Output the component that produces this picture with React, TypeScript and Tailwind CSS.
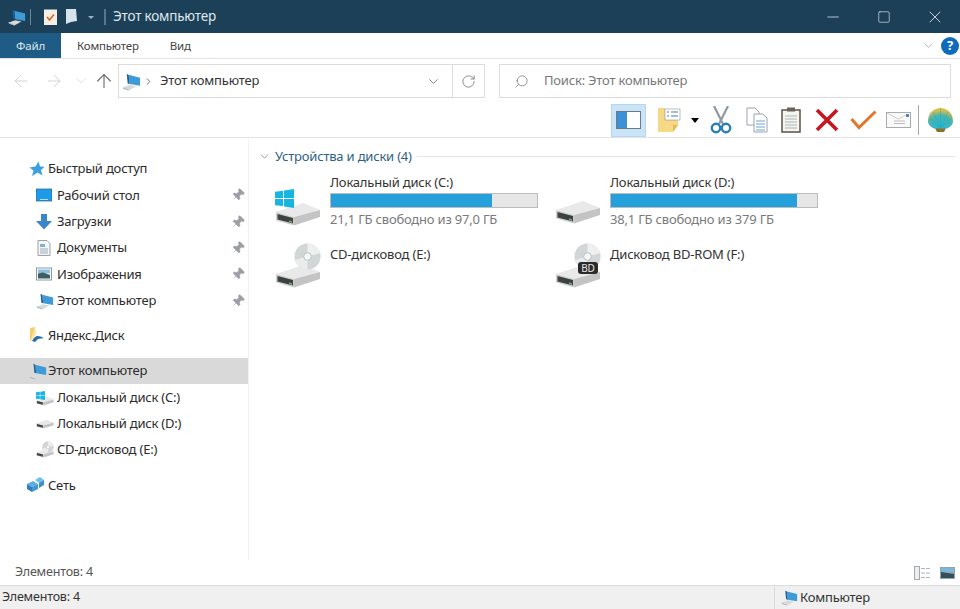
import { ArrowLeft, ArrowRight, ArrowUp, ChevronDown, ChevronRight, Minus, Pin, RotateCw, Search, Square, X } from "lucide-react";

const PcIcon = ({ size = 18 }: { size?: number }) => (
  <svg width={size} height={size} viewBox="0 0 20 20" className="shrink-0">
    <path d="M0 16.5 L8 13.5 L15 15 L7 19.5 Z" fill="#d5dadd" />
    <path d="M1 16.5 L7 18.5 L7 19.5 L1 17.5 Z" fill="#aab2b8" />
    <path d="M7 3 L19 6 V14.5 L8 12.5 Z" fill="#3f9bd8" />
    <path d="M7 3 L5 2 L6 12 L8 12.5 Z" fill="#1d5f96" />
  </svg>
);

const Drive = ({ w = 46, h = 24 }: { w?: number; h?: number }) => (
  <svg width={w} height={h} viewBox="0 0 46 24" className="shrink-0">
    <path d="M1 10 L28 1 L45 8 L19 15 Z" fill="#e9e9e9" />
    <path d="M19 15 L45 8 V15 L19 23.5 Z" fill="#c4c4c4" />
    <path d="M1 10 L19 15 V23.5 L1 18.5 Z" fill="#d0d0d0" />
    <path d="M2.5 12 L18 16 V21.5 L2.5 17.5 Z" fill="#3b423f" />
    <path d="M14 18.5 L17 19.3 V20.8 L14 20 Z" fill="#74b67c" />
  </svg>
);

const Disc = ({ size = 32 }: { size?: number }) => (
  <svg width={size} height={size} viewBox="0 0 32 32" className="shrink-0">
    <circle cx="16" cy="16" r="15.5" fill="#d3d6d6" />
    <path d="M16 .5 A15.5 15.5 0 0 1 31 12 L16 16 Z" fill="#eef0f0" />
    <path d="M16 31.5 A15.5 15.5 0 0 1 1 20 L16 16 Z" fill="#eaecec" />
    <circle cx="16" cy="16" r="4.5" fill="#f7f7f7" stroke="#b4b8b8" />
  </svg>
);

const WinLogo = ({ size = 20 }: { size?: number }) => (
  <svg width={size} height={size} viewBox="0 0 20 20" className="shrink-0">
    <path d="M0 3 L8.5 1.8 V9.5 H0 Z M9.5 1.6 L20 0 V9.5 H9.5 Z M0 10.5 H8.5 V18 L0 17 Z M9.5 10.5 H20 V20 L9.5 18.3 Z" fill="#16b5e4" />
  </svg>
);

const DriveC = () => (
  <div className="relative w-[46px] h-[53px] shrink-0 flex items-end">
    <Drive />
    <div className="absolute left-0 top-[16px]">
      <WinLogo size={19} />
    </div>
  </div>
);

const DrivePlain = () => (
  <div className="w-[46px] h-[51px] shrink-0 flex items-end">
    <Drive />
  </div>
);

const DriveDisc = ({ bd }: { bd?: boolean }) => (
  <div className="relative w-[46px] h-[43px] shrink-0 flex items-end">
    <Drive />
    <div className="absolute left-[19px] top-[-2px] z-0">
      <Disc size={27} />
    </div>
    {bd && (
      <div className="absolute left-[23px] top-[17px] w-[20px] h-[12px] rounded-[3px] bg-[#2a2a2a] text-[#e6e6e6] text-[10px] leading-[12px] text-center">
        BD
      </div>
    )}
  </div>
);

const QuickStar = () => (
  <svg width="16" height="16" viewBox="0 0 16 16" className="shrink-0">
    <path d="M9.5 .5 L11 5.5 L15.5 5.8 L12 9 L13.5 14.5 L8.5 11.5 L3 15 L4.5 9.5 L.5 6.5 L6.5 5.5 Z" fill="#3b9fe0" />
  </svg>
);

const DesktopIcon = () => (
  <svg width="16" height="16" viewBox="0 0 16 16" className="shrink-0">
    <rect x="0" y="2" width="16" height="12" fill="#1d9be6" stroke="#22618f" strokeWidth="0.7" />
    <rect x="4" y="12.2" width="8" height="0.8" fill="#d7eefb" />
  </svg>
);

const DownloadIcon = () => (
  <svg width="16" height="16" viewBox="0 0 16 16" className="shrink-0">
    <path d="M5 0 H11 V7 H16 L8 15.5 L0 7 H5 Z" fill="#3a86cb" />
  </svg>
);

const DocIcon = () => (
  <svg width="16" height="16" viewBox="0 0 16 16" className="shrink-0">
    <path d="M2 .5 H11 L14 3.5 V15.5 H2 Z" fill="#f4f6f7" stroke="#9aa3aa" />
    <rect x="4" y="4" width="5" height="3" fill="#7fb3cf" />
    <path d="M4 9 H12 M4 11 H12 M4 13 H12" stroke="#8d9aa3" strokeWidth="0.8" />
  </svg>
);

const PicIcon = () => (
  <svg width="16" height="16" viewBox="0 0 16 16" className="shrink-0">
    <rect x=".5" y="2" width="15" height="12" fill="#fff" stroke="#8e9aa3" />
    <rect x="2" y="3.5" width="12" height="4" fill="#8cc0e0" />
    <path d="M2 7.5 L7 6.5 L14 9 V12.5 H2 Z" fill="#3d5f63" />
  </svg>
);

const YandexIcon = () => (
  <svg width="16" height="18" viewBox="0 0 16 18" className="shrink-0">
    <path d="M1 1 L6 0 V8 L1 15 Z" fill="#f3cf6d" />
    <path d="M6 0 L7 7 L1 15 Z" fill="#fae3a0" />
    <path d="M3 14 C6 8 9 8 15 11 L9 12 L6 15 Z" fill="#2d6fa5" />
  </svg>
);

const NetIcon = () => (
  <svg width="18" height="18" viewBox="0 0 18 18" className="shrink-0 -ml-[2px]">
    <path d="M0 8 L6 5 L11 8 L5 11 Z" fill="#5ab0e6" />
    <path d="M0 8 L5 11 V16 L0 13 Z" fill="#2c7fbe" />
    <path d="M5 11 L11 8 V13 L5 16 Z" fill="#3f97d4" />
    <path d="M8 4 L13 1 L17 4 L12 7 Z" fill="#6cc0ee" />
    <path d="M12 7 L17 4 V9 L12 12 Z" fill="#3a8fcf" />
  </svg>
);

const NavPin = () => <Pin size={14} strokeWidth={1} fill="#9b9fa3" className="rotate-45 shrink-0 text-[#9b9fa3]" />;

const NavRow = ({ icon, label, pin, active, indent }: { icon: React.ReactNode; label: string; pin?: boolean; active?: boolean; indent?: boolean }) => (
  <div className={`flex items-center h-[26.3px] ${indent ? "pl-[36px]" : "pl-[29px]"} ${active ? "bg-[#d9d9d9]" : ""}`}>
    <div className={`flex items-center justify-start shrink-0 ${indent ? "w-[21px]" : "w-[19px]"}`}>{icon}</div>
    <span className="flex-1 truncate">{label}</span>
    {pin && (
      <div className="w-[20px] flex justify-center">
        <NavPin />
      </div>
    )}
  </div>
);

const DriveTile = ({ icon, name, bar, free }: { icon: React.ReactNode; name: string; bar?: string; free?: string }) => (
  <div className="flex items-start w-[280px] h-[72px]">
    <div className="w-[55px]">{icon}</div>
    <div className="flex flex-col w-[208px]">
      <div className="h-[19px] leading-[19px] text-[#333]">{name}</div>
      {bar && (
        <div className="h-[15px] bg-[#e6e6e6] border border-[#bcbcbc] mt-[1px]">
          <div className={`h-full bg-[#26a0da] ${bar}`} />
        </div>
      )}
      {free && <div className="text-[#7a7a7a] leading-[19px] mt-[2px]">{free}</div>}
    </div>
  </div>
);

export default function App() {
  return (
    <div className="w-[960px] h-[609px] overflow-hidden flex flex-col bg-white text-[13px] text-[#2b2b2b] font-['Noto_Sans',sans-serif] tracking-[-0.2px]">
      {/* Title bar */}
      <div className="h-[33px] bg-[#1b4058] flex items-center text-[#dfe7ec] shrink-0">
        <div className="pl-[8px] flex items-center">
          <PcIcon size={18} />
          <div className="w-px h-[16px] bg-[#6d8798] ml-[4px] mr-[13px]" />
          <svg width="13" height="16" viewBox="0 0 13 16">
            <rect x="0" y="0.5" width="13" height="15.5" fill="#f3efe4" />
            <path d="M3 8 L5.5 11 L10 5.5" stroke="#d9652b" strokeWidth="1.6" fill="none" />
          </svg>
          <svg width="12" height="15" viewBox="0 0 12 15" className="ml-[9px]">
            <path d="M0 0 H10 L11 12 L5 13 L0 15 Z" fill="#d6e3ec" />
          </svg>
          <div className="ml-[10px] mt-[2px] w-0 h-0 border-l-[3px] border-r-[3px] border-t-[3px] border-l-transparent border-r-transparent border-t-[#9fb0bb]" />
          <div className="w-[2px] h-[16px] bg-[#5b7688] ml-[10px] mr-[7px]" />
        </div>
        <span className="text-[13.5px]">Этот компьютер</span>
        <div className="ml-auto flex items-center text-[#e8eef2]">
          <div className="w-[51px] flex justify-center"><Minus size={18} strokeWidth={1} /></div>
          <div className="w-[51px] flex justify-center"><Square size={14} strokeWidth={1.1} /></div>
          <div className="w-[51px] flex justify-center"><X size={20} strokeWidth={1} /></div>
        </div>
      </div>

      {/* Ribbon tabs */}
      <div className="h-[26px] flex items-center border-b border-[#e3e3e3] shrink-0 text-[11.5px]">
        <div className="w-[61px] h-full bg-[#1f5c85] text-[#dbe7ef] flex items-center justify-center">Файл</div>
        <div className="ml-[16px] text-[#444]">Компьютер</div>
        <div className="ml-[31px] text-[#444]">Вид</div>
        <ChevronDown size={15} strokeWidth={1} className="ml-auto mr-[5px] text-[#8a8a8a]" />
        <div className="w-[18px] h-[18px] mr-[1px] rounded-full bg-[#0f6cbd] text-white flex items-center justify-center text-[13px] font-bold">?</div>
      </div>

      {/* Address bar */}
      <div className="h-[44px] flex items-center shrink-0">
        <div className="w-[118px] pl-[11px] flex items-center text-[#cfcfcf]">
          <ArrowLeft size={20} strokeWidth={1.1} />
          <ArrowRight size={20} strokeWidth={1.1} className="ml-[13px]" />
          <ChevronDown size={16} strokeWidth={1} className="ml-[9px]" />
          <ArrowUp size={22} strokeWidth={1.2} className="ml-[4px] text-[#666]" />
        </div>
        <div className="w-[367px] h-[34px] border border-[#dcdcdc] flex items-center">
          <div className="pl-[3px] flex items-center">
            <PcIcon size={19} />
            <ChevronRight size={11} className="ml-[2px] text-[#666]" />
          </div>
          <span className="ml-[6px] text-[#333]">Этот компьютер</span>
          <ChevronDown size={15} strokeWidth={1.3} className="ml-auto mr-[11px] text-[#666]" />
          <div className="w-[32px] h-full border-l border-[#dcdcdc] flex items-center justify-center">
            <RotateCw size={15} strokeWidth={1.2} className="text-[#666]" />
          </div>
        </div>
        <div className="ml-[14px] w-[452px] h-[34px] border border-[#dcdcdc] flex items-center text-[#777]">
          <Search size={15} strokeWidth={1.2} className="ml-[14px] -scale-x-100 text-[#777]" />
          <span className="ml-[15px]">Поиск: Этот компьютер</span>
        </div>
      </div>

      {/* Toolbar */}
      <div className="h-[35px] flex items-center justify-end border-b border-[#e3e3e3] shrink-0 pr-[6px]">
        <div className="w-[35px] h-[33px] bg-[#cce4f7] border border-[#b4d8f3] flex items-center justify-center mr-[11px]">
          <div className="w-[25px] h-[18px] border border-[#6a7b88] flex bg-white">
            <div className="w-[10px] bg-[#3f8fd8]" />
          </div>
        </div>
        <svg width="24" height="26" viewBox="0 0 24 26" className="mr-[10px]">
          <path d="M1 1 H8 V6 H21 V18 L16 25 H1 Z" fill="#f7d985" />
          <path d="M21 18 L16 18 V25 Z" fill="#e4bb5a" />
          <rect x="8" y="2" width="15" height="11" fill="#fff" stroke="#8a9096" strokeWidth="0.6" />
          <path d="M10 5 H12 M14 5 H21 M10 9 H12 M14 9 H21" stroke="#4b7c9b" />
        </svg>
        <div className="w-0 h-0 border-l-[4px] border-r-[4px] border-t-[5px] border-l-transparent border-r-transparent border-t-black mr-[11px]" />
        <svg width="22" height="28" viewBox="0 0 22 28" className="mr-[14px]">
          <path d="M4 0 L13 18 M18 0 L9 18" stroke="#8e9aa3" strokeWidth="2.2" />
          <circle cx="6" cy="22" r="4.2" fill="none" stroke="#2a7fb6" strokeWidth="2.4" />
          <circle cx="16" cy="22" r="4.2" fill="none" stroke="#2a7fb6" strokeWidth="2.4" />
        </svg>
        <svg width="22" height="26" viewBox="0 0 22 26" className="mr-[13px]">
          <path d="M1 1 H9 L13 5 V18 H1 Z" fill="#fff" stroke="#9aa3aa" />
          <path d="M8 7 H17 L21 11 V25 H8 Z" fill="#fff" stroke="#9aa3aa" />
          <path d="M10 14 H19 M10 17 H19 M10 20 H19 M10 23 H19" stroke="#6aa5d0" />
        </svg>
        <svg width="20" height="26" viewBox="0 0 20 26" className="mr-[14px]">
          <rect x="1" y="3" width="18" height="22" fill="#f5f5f0" stroke="#5b5147" strokeWidth="1.5" />
          <rect x="6" y="0.5" width="8" height="4" fill="#6b6259" />
          <path d="M4 9 H16 M4 12 H16 M4 15 H16 M4 18 H16 M4 21 H16" stroke="#a9b2b8" />
        </svg>
        <svg width="24" height="24" viewBox="0 0 24 24" className="mr-[11px]">
          <path d="M2 2 L22 22 M22 2 L2 22" stroke="#c8161d" strokeWidth="3.6" />
        </svg>
        <svg width="27" height="20" viewBox="0 0 27 20" className="mr-[9px]">
          <path d="M1.5 9 L9 17.5 L25.5 1.5" stroke="#e0772c" strokeWidth="3" fill="none" />
        </svg>
        <svg width="25" height="17" viewBox="0 0 25 17" className="mr-[7px]">
          <rect x=".5" y=".5" width="24" height="15" fill="#fafafa" stroke="#a8acaf" />
          <rect x="20" y="2" width="3" height="3" fill="#4a89c6" />
          <path d="M1 1 L12 7 L20 3" stroke="#d0d0d0" fill="none" />
          <path d="M8 9 H19 M8 11.5 H19" stroke="#bcbcbc" />
        </svg>
        <div className="w-px h-[30px] bg-[#a9a9a9] mr-[8px]" />
        <svg width="27" height="24" viewBox="0 0 27 24">
          <defs>
            <radialGradient id="shell" cx="50%" cy="85%" r="75%">
              <stop offset="0%" stopColor="#1fb9d8" />
              <stop offset="65%" stopColor="#4bb4ae" />
              <stop offset="100%" stopColor="#d9c04a" />
            </radialGradient>
          </defs>
          <path d="M8 20 H19 L17 24 H10 Z" fill="#8f6f2a" />
          <path d="M1 13 C1 5 7 0 13.5 0 C20 0 26 5 26 13 C26 17 23 19 20 20.5 H7 C4 19 1 17 1 13 Z" fill="url(#shell)" />
          <path d="M13.5 20 L6 4 M13.5 20 L13.5 1 M13.5 20 L21 4 M13.5 20 L2.5 10 M13.5 20 L24.5 10" stroke="#2f9aa8" strokeWidth="0.6" opacity="0.6" />
        </svg>
      </div>

      {/* Main */}
      <div className="flex-1 flex min-h-0">
        <div className="w-[248px] shrink-0 pt-[18px] flex flex-col">
          <NavRow icon={<QuickStar />} label="Быстрый доступ" />
          <NavRow indent pin icon={<DesktopIcon />} label="Рабочий стол" />
          <NavRow indent pin icon={<DownloadIcon />} label="Загрузки" />
          <NavRow indent pin icon={<DocIcon />} label="Документы" />
          <NavRow indent pin icon={<PicIcon />} label="Изображения" />
          <NavRow indent pin icon={<PcIcon size={18} />} label="Этот компьютер" />
          <div className="h-[9px]" />
          <NavRow icon={<YandexIcon />} label="Яндекс.Диск" />
          <div className="h-[9px]" />
          <NavRow active icon={<PcIcon size={18} />} label="Этот компьютер" />
          <NavRow indent icon={<div className="relative w-[18px] h-[16px]"><div className="absolute left-0 bottom-0"><Drive w={18} h={10} /></div><div className="absolute left-0 top-[1px]"><WinLogo size={9} /></div></div>} label="Локальный диск (C:)" />
          <NavRow indent icon={<Drive w={18} h={10} />} label="Локальный диск (D:)" />
          <NavRow indent icon={<div className="relative w-[18px] h-[16px]"><div className="absolute left-0 bottom-0"><Drive w={18} h={10} /></div><div className="absolute left-[6px] top-[-1px]"><Disc size={12} /></div></div>} label="CD-дисковод (E:)" />
          <div className="h-[9px]" />
          <NavRow icon={<NetIcon />} label="Сеть" />
        </div>
        <div className="w-px bg-[#f2f2f2] shrink-0" />

        <div className="flex-1 min-w-0 pl-[9px] pt-[9px]">
          <div className="flex items-center h-[19px] text-[#2f5f85]">
            <ChevronDown size={13} strokeWidth={1.2} className="text-[#666]" />
            <span className="ml-[4px]">Устройства и диски (4)</span>
            <div className="flex-1 h-px bg-[#e5e5e5] ml-[5px] mr-[5px]" />
          </div>
          <div className="flex flex-wrap pl-[17px] mt-[7px] w-[600px]">
            <DriveTile icon={<DriveC />} name="Локальный диск (C:)" bar="w-[78%]" free="21,1 ГБ свободно из 97,0 ГБ" />
            <DriveTile icon={<DrivePlain />} name="Локальный диск (D:)" bar="w-[90.5%]" free="38,1 ГБ свободно из 379 ГБ" />
            <DriveTile icon={<DriveDisc />} name="CD-дисковод (E:)" />
            <DriveTile icon={<DriveDisc bd />} name="Дисковод BD-ROM (F:)" />
          </div>
        </div>
      </div>

      {/* Details line */}
      <div className="h-[25px] flex items-center shrink-0 pl-[15px] pr-[5px] text-[#555] text-[12.5px]">
        <span>Элементов: 4</span>
        <div className="ml-auto flex items-center">
          <svg width="17" height="14" viewBox="0 0 17 14">
            <rect x=".5" y=".5" width="5" height="13" fill="#eee" stroke="#a7a7a7" />
            <path d="M7 2.5 H17 M7 7 H17 M7 11.5 H17" stroke="#a8b6c0" strokeDasharray="4 1" />
          </svg>
          <svg width="15" height="12" viewBox="0 0 15 12" className="ml-[9px]">
            <rect width="15" height="12" fill="#92a5ad" />
            <rect x="1" y="1" width="13" height="4" fill="#7fb6d8" />
            <path d="M1 5 L14 7 V11 H1 Z" fill="#31505a" />
          </svg>
        </div>
      </div>

      {/* Status bar */}
      <div className="h-[24px] bg-[#f0f0f0] border-t border-[#dcdcdc] flex items-center shrink-0 text-[12.5px] text-[#333]">
        <span className="pl-[2px]">Элементов: 4</span>
        <div className="ml-auto w-[186px] h-full border-l border-[#dcdcdc] flex items-center pl-[6px]">
          <PcIcon size={17} />
          <span className="ml-[2px] text-[13px]">Компьютер</span>
        </div>
      </div>
    </div>
  );
}
